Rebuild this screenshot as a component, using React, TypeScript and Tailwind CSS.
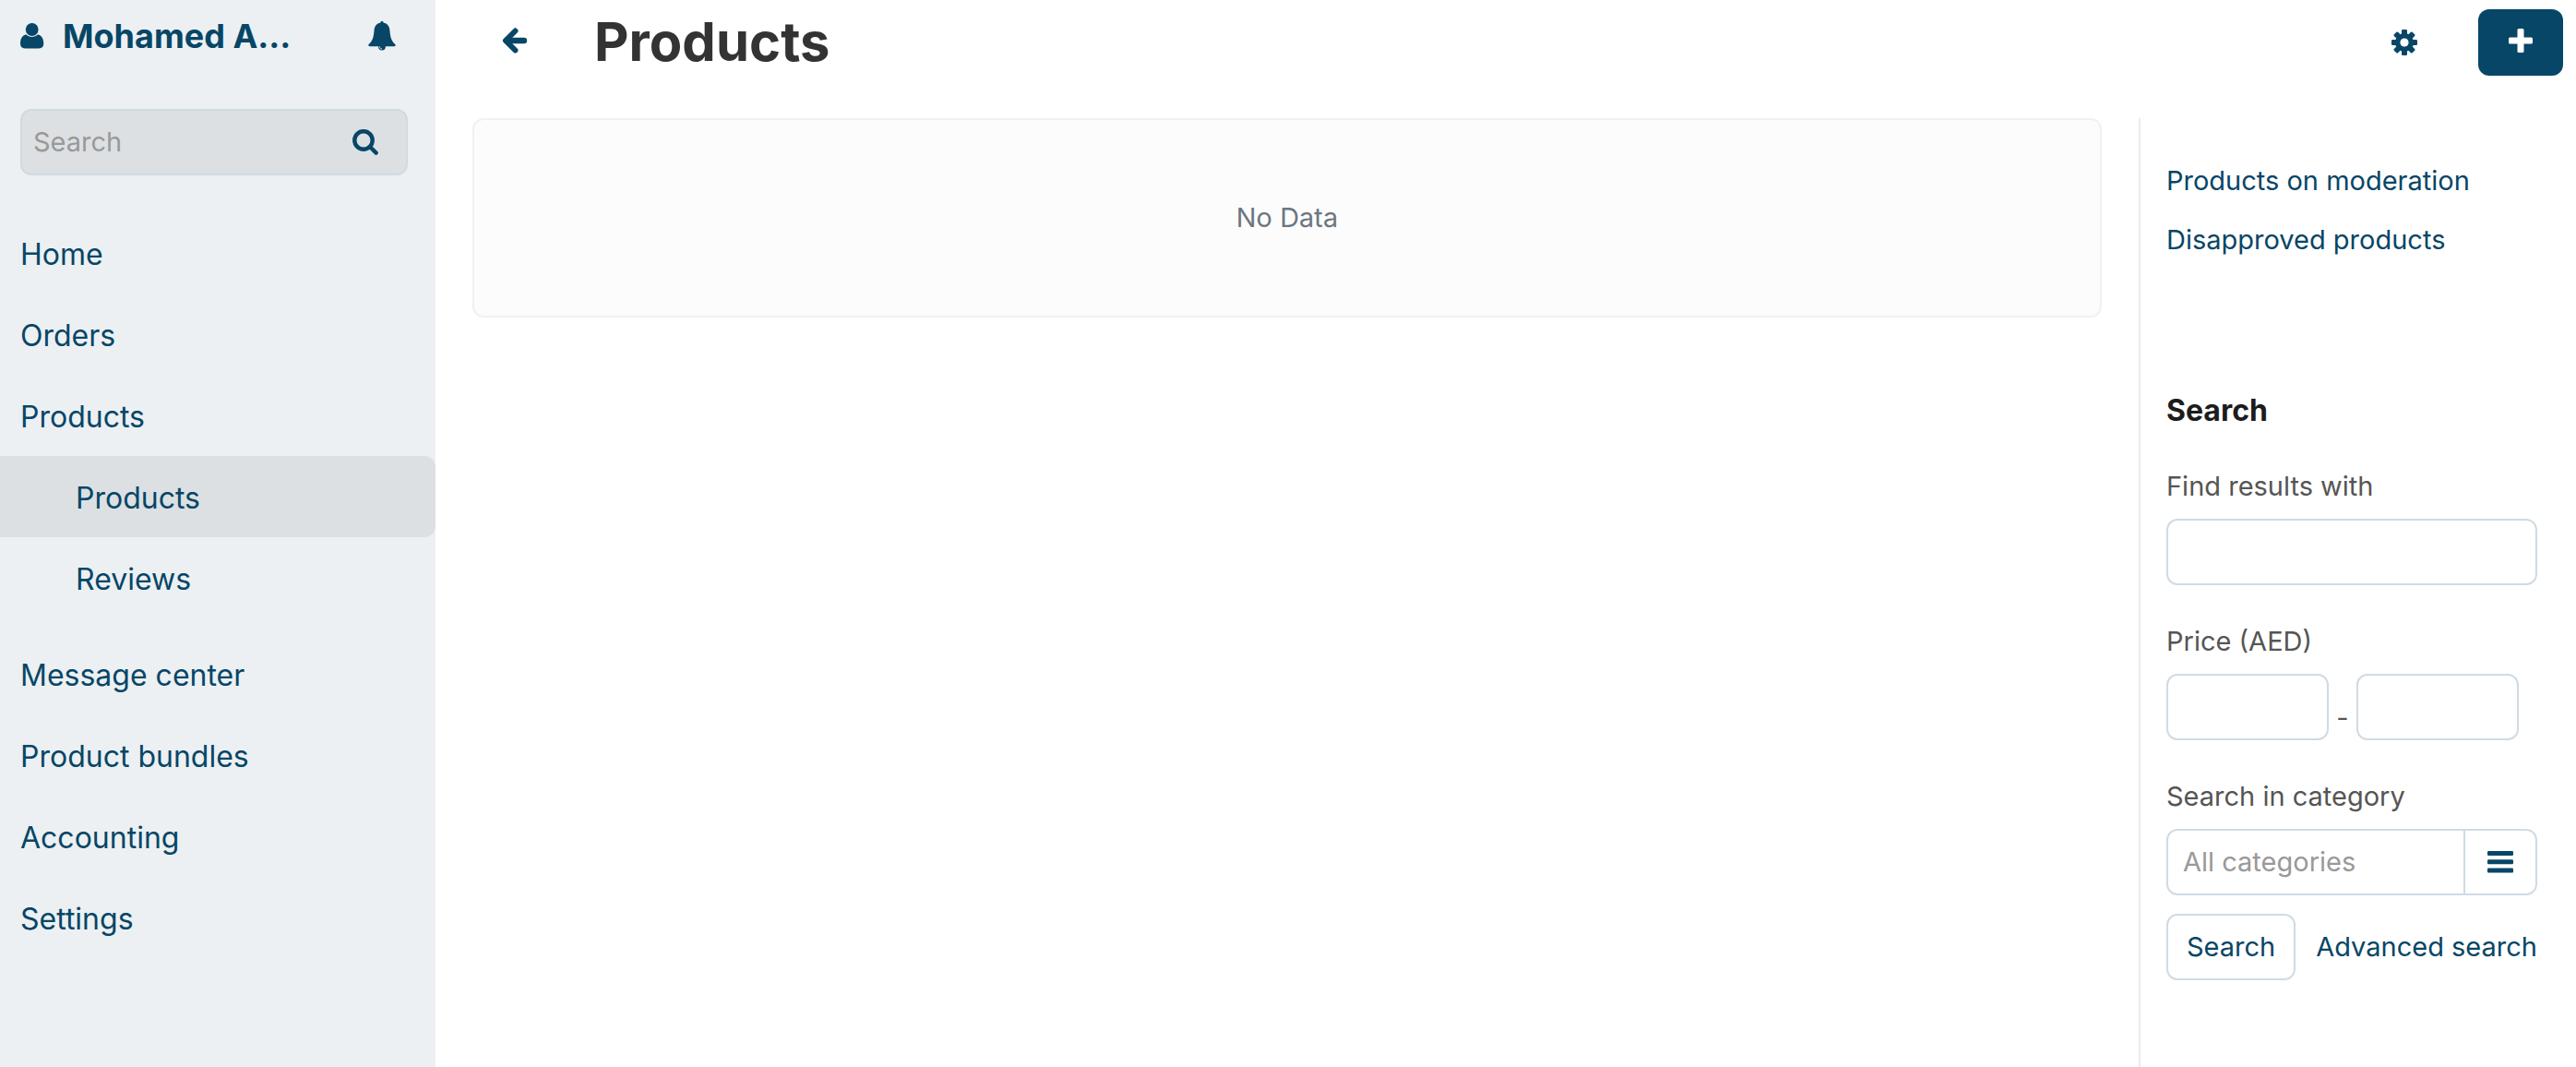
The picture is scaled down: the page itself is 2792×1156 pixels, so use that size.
import { useState } from "react";

const mainNav = [
  { label: "Home" },
  { label: "Orders" },
  { label: "Products", children: ["Products", "Reviews"] },
  { label: "Message center" },
  { label: "Product bundles" },
  { label: "Accounting" },
  { label: "Settings" },
];

const inputClass = "h-[72px] rounded-xl border-2 border-[#d0dbe3] bg-white px-4 text-[29px] text-[#333] outline-none focus:border-[#074666]";

function UserIcon() {
  return (
    <svg viewBox="0 0 26 28" className="h-7 w-[26px] shrink-0" fill="currentColor" aria-hidden="true">
      <circle cx="12.7" cy="7" r="6.9" />
      <path d="M6.5 12.6C2 12.8 0 17.5 0 22.3C0 25.6 1.8 27.5 5 27.5H20.3C23.5 27.5 25.3 25.6 25.3 22.3C25.3 17.5 23.3 12.8 18.8 12.6C17.3 14.1 15.2 15 12.7 15C10.2 15 8 14.1 6.5 12.6Z" />
    </svg>
  );
}

function BellIcon() {
  return (
    <svg viewBox="0 0 30 32" className="h-8 w-[30px]" fill="currentColor" aria-hidden="true">
      <path d="M15 0C16 0 16.7 .7 16.7 1.7C20.6 2.3 23 5.2 23.4 9.4C24 16.5 25 21.5 29.6 25.2V26C29.6 26.8 29 27.2 28.2 27.2H18.9A3.9 4.3 0 0 1 11.1 27.2H1.8C1 27.2 .4 26.8 .4 26V25.2C5 21.5 6 16.5 6.6 9.4C7 5.2 9.4 2.3 13.3 1.7C13.3 .7 14 0 15 0Z" />
      <path d="M12.5 27.4C12.6 29.1 13.6 30 15 30.1" fill="none" stroke="#ecf0f3" strokeWidth="0.9" />
    </svg>
  );
}

function SearchIcon() {
  return (
    <svg viewBox="0 0 28 28" className="size-7" fill="none" stroke="currentColor" strokeWidth="4.4" aria-hidden="true">
      <circle cx="12" cy="12" r="9.7" />
      <path d="M19 19L25.6 25.6" strokeLinecap="round" />
    </svg>
  );
}

function ArrowLeftIcon() {
  return (
    <svg viewBox="0 0 28 28" className="size-7" fill="none" stroke="currentColor" aria-hidden="true">
      <path d="M14.5 3.5L4 14L14.5 24.5" strokeWidth="6" strokeLinecap="round" strokeLinejoin="round" />
      <path d="M5 14H24" strokeWidth="6.4" strokeLinecap="round" />
    </svg>
  );
}

function GearIcon() {
  return (
    <svg viewBox="0 0 28 28" className="size-7" fill="currentColor" aria-hidden="true">
      {[0, 45, 90, 135].map((angle) => (
        <rect key={angle} x="11" y="0" width="6" height="28" rx="1.2" transform={`rotate(${angle} 14 14)`} />
      ))}
      <circle cx="14" cy="14" r="10" />
      <circle cx="14" cy="14" r="4.6" fill="#fff" />
    </svg>
  );
}

function PlusIcon() {
  return (
    <svg viewBox="0 0 26 26" className="size-[26px]" fill="currentColor" aria-hidden="true">
      <rect x="9.5" y="0" width="7" height="26" rx="1.5" />
      <rect x="0" y="9.5" width="26" height="7" rx="1.5" />
    </svg>
  );
}

function MenuIcon() {
  return (
    <svg viewBox="0 0 28 24" className="h-6 w-7" fill="currentColor" aria-hidden="true">
      <rect x="0" y="0" width="28" height="5" rx="1.2" />
      <rect x="0" y="9.2" width="28" height="5" rx="1.2" />
      <rect x="0" y="18.4" width="28" height="5" rx="1.2" />
    </svg>
  );
}

function Sidebar({ active, onSelect }: { active: string; onSelect: (label: string) => void }) {
  return (
    <aside className="w-[472px] shrink-0 bg-[#ecf0f3]">
      <div className="flex h-[78px] items-center pl-[22px] pr-[43px]">
        <a href="#account" className="flex min-w-0 flex-1 items-center gap-5 text-[36px] font-bold">
          <UserIcon />
          <span className="truncate">Mohamed A...</span>
        </a>
        <button type="button" aria-label="Notifications">
          <BellIcon />
        </button>
      </div>

      <form className="mt-10 ml-[22px] mr-[30px] flex h-[72px] rounded-xl border-2 border-[#d0dae1] bg-[#dce0e3]" onSubmit={(e) => e.preventDefault()}>
        <input
          type="text"
          aria-label="Search"
          placeholder="Search"
          className="min-w-0 flex-1 bg-transparent px-3 text-[29px] placeholder:text-[#999] outline-none"
        />
        <button type="submit" aria-label="Submit search" className="flex w-[88px] items-center justify-center">
          <SearchIcon />
        </button>
      </form>

      <nav className="mt-10 text-[32px]">
        {mainNav.map((item) => (
          <div key={item.label}>
            <a href="#" className="flex h-[88px] items-center pt-[3px] pl-[22px]">
              {item.label}
            </a>
            {item.children && (
              <div className="mb-4">
                {item.children.map((child) => (
                  <a
                    key={child}
                    href="#"
                    onClick={() => onSelect(child)}
                    className={`flex h-[88px] items-center pt-[3px] pl-[82px] ${active === child ? "rounded-r-xl bg-[#dce0e3]" : ""}`}
                  >
                    {child}
                  </a>
                ))}
              </div>
            )}
          </div>
        ))}
      </nav>
    </aside>
  );
}

function SearchPanel() {
  return (
    <aside className="w-[474px] shrink-0 border-l-2 border-[#ebebeb] pl-7 pr-[42px] pt-9 text-[29px]">
      <a href="#moderation" className="flex h-16 items-center">Products on moderation</a>
      <a href="#disapproved" className="flex h-16 items-center">Disapproved products</a>

      <form className="mt-[129px]" onSubmit={(e) => e.preventDefault()}>
        <h2 className="text-[32px] leading-12 font-bold text-[#1c1c1c]">Search</h2>

        <div className="mt-[38px] flex flex-col gap-[15px] text-[#555]">
          <label htmlFor="find" className="leading-10">Find results with</label>
          <input id="find" type="text" className={`${inputClass} w-full`} />
        </div>

        <div className="mt-[41px] flex flex-col gap-[15px] text-[#555]">
          <label htmlFor="price-from" className="leading-10">Price (AED)</label>
          <div className="flex items-center">
            <input id="price-from" type="text" className={`${inputClass} w-44`} />
            <span className="w-[30px] pt-6 text-center">-</span>
            <input type="text" aria-label="Price to" className={`${inputClass} w-44`} />
          </div>
        </div>

        <div className="mt-[41px] flex flex-col gap-[15px] text-[#555]">
          <label htmlFor="category" className="leading-10">Search in category</label>
          <div className="flex h-[72px] overflow-hidden rounded-xl border-2 border-[#d0dbe3]">
            <input
              id="category"
              type="text"
              placeholder="All categories"
              className="min-w-0 flex-1 px-4 placeholder:text-[#999] outline-none"
            />
            <button type="button" aria-label="Choose category" className="flex w-[78px] items-center justify-center border-l-2 border-[#d0dbe3] text-[#074666]">
              <MenuIcon />
            </button>
          </div>
        </div>

        <div className="mt-5 flex items-center justify-between">
          <button type="submit" className="h-[72px] rounded-xl border-2 border-[#d0dbe3] px-5">Search</button>
          <a href="#advanced">Advanced search</a>
        </div>
      </form>
    </aside>
  );
}

export default function App() {
  const [active, setActive] = useState("Products");

  return (
    <div className="flex min-h-screen bg-white font-['Inter',sans-serif] text-[#074666]">
      <Sidebar active={active} onSelect={setActive} />

      <div className="flex min-w-0 flex-1 flex-col">
        <header className="flex h-32 items-start pl-[72px] pr-[14px] pt-[10px]">
          <a href="#back" aria-label="Back" className="flex h-[68px] w-[100px] items-center">
            <ArrowLeftIcon />
          </a>
          <h1 className="flex-1 text-[58px] leading-[70px] font-bold text-[#333]">Products</h1>
          <button type="button" aria-label="Settings" className="mr-[66px] flex h-[72px] items-center">
            <GearIcon />
          </button>
          <button type="button" aria-label="Add product" className="flex h-[72px] w-[92px] items-center justify-center rounded-xl bg-[#074666] pb-1 text-white">
            <PlusIcon />
          </button>
        </header>

        <div className="flex flex-1">
          <main className="min-w-0 flex-1 px-10">
            <p className="flex h-[216px] items-center justify-center rounded-xl border-2 border-[#f1f1f1] bg-[#fcfcfc] text-[29px] text-[#6c7780]">
              No Data
            </p>
          </main>
          <SearchPanel />
        </div>
      </div>
    </div>
  );
}
